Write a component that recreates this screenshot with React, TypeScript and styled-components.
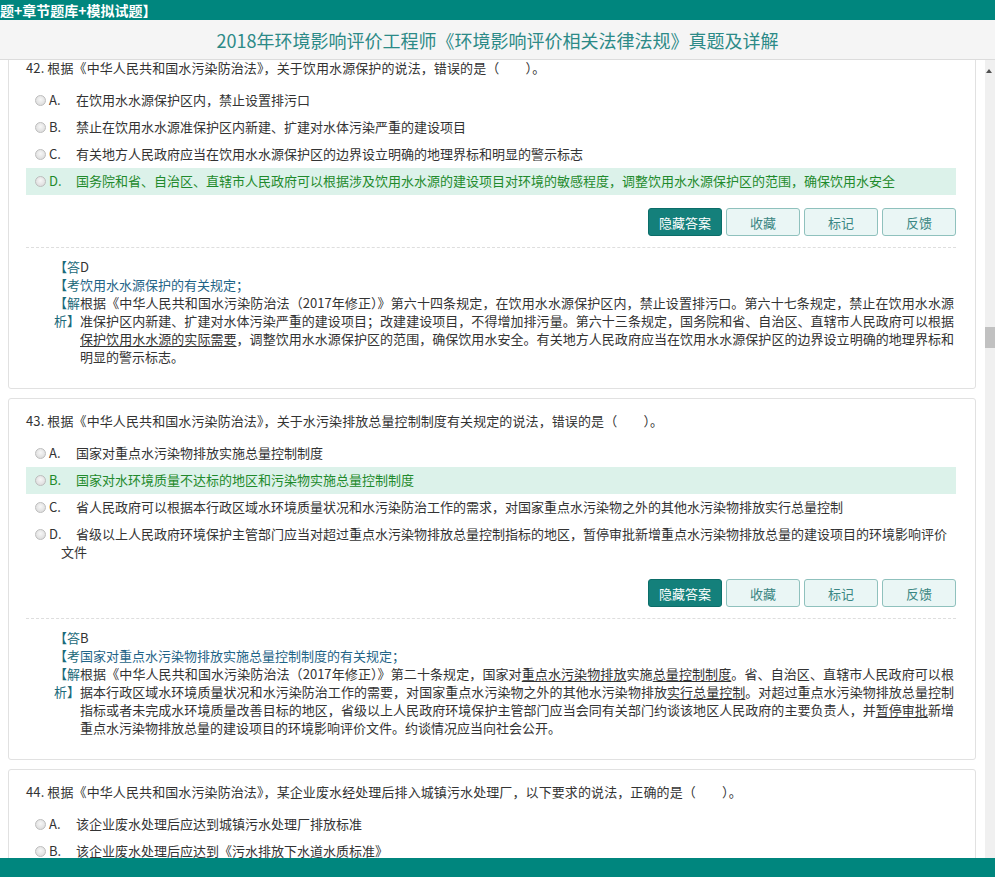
import React, { FunctionComponent, ReactNode } from 'react';
import styled, { createGlobalStyle } from 'styled-components';

const teal = '#00867e';
const fontStack =
  '"Microsoft YaHei", "Noto Sans CJK SC", "Noto Sans", sans-serif';

const GlobalStyle = createGlobalStyle`
  html, body {
    margin: 0;
    padding: 0;
    background: #fff;
  }

  body {
    font-family: ${fontStack};
    font-size: 13px;
    color: #333;
  }
`;

const Page = styled.div`
  display: flex;
  flex-direction: column;
  height: 877px;
  overflow: hidden;
`;

const TopBar = styled.div`
  flex: none;
  height: 20px;
  background: ${teal};
  color: #fff;
  font-weight: bold;
  font-size: 14px;
  line-height: 20px;
  white-space: nowrap;
  overflow: hidden;
  text-indent: -56px;
`;

const TitleBar = styled.h1`
  flex: none;
  margin: 0;
  height: 39px;
  line-height: 40px;
  background: #f5f5f5;
  border-bottom: 1px solid #dcdcdc;
  text-align: center;
  font-size: 18px;
  font-weight: normal;
  color: #2c8a87;
`;

const Main = styled.div`
  flex: 1;
  min-height: 0;
  display: flex;
`;

const Content = styled.div`
  flex: 1;
  overflow: hidden;
  padding: 0 9px 0 8px;
`;

const CardList = styled.div`
  display: flex;
  flex-direction: column;
  gap: 9px;
  margin-top: -15px;
`;

const Card = styled.section`
  background: #fff;
  border: 1px solid #e1e1e1;
  border-radius: 3px;
  padding: 13px 19px 22px 17px;
`;

const Question = styled.div`
  line-height: 18px;
  letter-spacing: 0.1px;
`;

const Options = styled.div`
  margin-top: 10px;
`;

interface OptionRowProps {
  correct: boolean;
}

const OptionRow = styled.div<OptionRowProps>`
  padding: 4px 9px 5px 35px;
  text-indent: -26px;
  line-height: 18px;
  text-align: justify;
  background: ${({ correct }) => (correct ? '#dcf2ea' : 'transparent')};
  color: ${({ correct }) => (correct ? '#1f8a2c' : '#333')};
`;

const Radio = styled.span`
  display: inline-block;
  box-sizing: border-box;
  width: 11px;
  height: 11px;
  margin-right: 3px;
  border: 1px solid #bdbdbd;
  border-radius: 50%;
  background: radial-gradient(circle at 50% 40%, #f7f7f7, #d6d6d6);
  vertical-align: -1px;
  text-indent: 0;
`;

const Letter = styled.span`
  display: inline-block;
  width: 27px;
  text-indent: 0;
`;

const ButtonBar = styled.div`
  display: flex;
  justify-content: flex-end;
  gap: 4px;
  margin-top: 13px;
`;

interface ButtonProps {
  primary?: boolean;
}

const Button = styled.button<ButtonProps>`
  width: 74px;
  height: 28px;
  padding: 0;
  border-radius: 3px;
  font-family: ${fontStack};
  font-size: 13px;
  border: 1px solid ${({ primary }) => (primary ? '#0b6d69' : '#8fc1bd')};
  background: ${({ primary }) => (primary ? '#14807b' : '#eaf6f5')};
  color: ${({ primary }) => (primary ? '#fff' : '#3a8683')};
`;

const Divider = styled.div`
  margin-top: 11px;
  border-top: 1px dashed #dedede;
`;

const Analysis = styled.div`
  margin-top: 10px;
  padding-left: 28px;
  line-height: 18px;
`;

const AnalysisRow = styled.div`
  display: flex;
`;

const Label = styled.span`
  flex: none;
  width: 26px;
  color: #1b6a7a;
`;

interface BodyProps {
  tone?: 'point';
}

const Body = styled.div<BodyProps>`
  flex: 1;
  padding-right: 2px;
  text-align: justify;
  color: ${({ tone }) => (tone === 'point' ? '#1f6487' : '#333')};
`;

const Mark = styled.u`
  text-underline-offset: 2px;
`;

const ScrollTrack = styled.div`
  flex: none;
  width: 10px;
  background: #f0f0f0;
  display: flex;
  flex-direction: column;
  align-items: center;
`;

const ScrollArrow = styled.div`
  margin-top: 9px;
  margin-left: -2px;
  width: 0;
  height: 0;
  border-left: 3px solid transparent;
  border-right: 3px solid transparent;
  border-bottom: 4px solid #505050;
`;

const ScrollThumb = styled.div`
  margin-top: 254px;
  width: 100%;
  height: 21px;
  background: #c1c1c1;
`;

const BottomBar = styled.div`
  flex: none;
  height: 19px;
  background: ${teal};
`;

interface OptionItem {
  letter: string;
  text: string;
  correct?: boolean;
}

interface QuestionCardProps {
  title: string;
  options: OptionItem[];
  answer?: string;
  point?: string;
  analysis?: ReactNode;
}

const QuestionCard: FunctionComponent<QuestionCardProps> = ({
  title,
  options,
  answer,
  point,
  analysis,
}) => (
  <Card>
    <Question>{title}</Question>
    <Options>
      {options.map(option => (
        <OptionRow key={option.letter} correct={!!option.correct}>
          <Radio />
          <Letter>{option.letter}.</Letter>
          {option.text}
        </OptionRow>
      ))}
    </Options>
    {answer && (
      <>
        <ButtonBar>
          <Button primary>隐藏答案</Button>
          <Button>收藏</Button>
          <Button>标记</Button>
          <Button>反馈</Button>
        </ButtonBar>
        <Divider />
        <Analysis>
          <AnalysisRow>
            <Label>【答</Label>
            <Body>{answer}</Body>
          </AnalysisRow>
          <AnalysisRow>
            <Label>【考</Label>
            <Body tone="point">{point}</Body>
          </AnalysisRow>
          <AnalysisRow>
            <Label>【解析】</Label>
            <Body>{analysis}</Body>
          </AnalysisRow>
        </Analysis>
      </>
    )}
  </Card>
);

const App: FunctionComponent = () => (
  <Page>
    <GlobalStyle />
    <TopBar>【历年真题+章节题库+模拟试题】</TopBar>
    <TitleBar>
      2018年环境影响评价工程师《环境影响评价相关法律法规》真题及详解
    </TitleBar>
    <Main>
      <Content>
        <CardList>
          <QuestionCard
            title="42. 根据《中华人民共和国水污染防治法》，关于饮用水源保护的说法，错误的是（　　）。"
            options={[
              { letter: 'A', text: '在饮用水水源保护区内，禁止设置排污口' },
              {
                letter: 'B',
                text: '禁止在饮用水水源准保护区内新建、扩建对水体污染严重的建设项目',
              },
              {
                letter: 'C',
                text: '有关地方人民政府应当在饮用水水源保护区的边界设立明确的地理界标和明显的警示标志',
              },
              {
                letter: 'D',
                text: '国务院和省、自治区、直辖市人民政府可以根据涉及饮用水水源的建设项目对环境的敏感程度，调整饮用水水源保护区的范围，确保饮用水安全',
                correct: true,
              },
            ]}
            answer="D"
            point="饮用水水源保护的有关规定；"
            analysis={
              <>
                根据《中华人民共和国水污染防治法（2017年修正）》第六十四条规定，在饮用水水源保护区内，禁止设置排污口。第六十七条规定，禁止在饮用水水源准保护区内新建、扩建对水体污染严重的建设项目；改建建设项目，不得增加排污量。第六十三条规定，国务院和省、自治区、直辖市人民政府可以根据
                <Mark>保护饮用水水源的实际需要</Mark>
                ，调整饮用水水源保护区的范围，确保饮用水安全。有关地方人民政府应当在饮用水水源保护区的边界设立明确的地理界标和明显的警示标志。
              </>
            }
          />
          <QuestionCard
            title="43. 根据《中华人民共和国水污染防治法》，关于水污染排放总量控制制度有关规定的说法，错误的是（　　）。"
            options={[
              { letter: 'A', text: '国家对重点水污染物排放实施总量控制制度' },
              {
                letter: 'B',
                text: '国家对水环境质量不达标的地区和污染物实施总量控制制度',
                correct: true,
              },
              {
                letter: 'C',
                text: '省人民政府可以根据本行政区域水环境质量状况和水污染防治工作的需求，对国家重点水污染物之外的其他水污染物排放实行总量控制',
              },
              {
                letter: 'D',
                text: '省级以上人民政府环境保护主管部门应当对超过重点水污染物排放总量控制指标的地区，暂停审批新增重点水污染物排放总量的建设项目的环境影响评价文件',
              },
            ]}
            answer="B"
            point="国家对重点水污染物排放实施总量控制制度的有关规定；"
            analysis={
              <>
                根据《中华人民共和国水污染防治法（2017年修正）》第二十条规定，国家对
                <Mark>重点水污染物排放</Mark>实施<Mark>总量控制制度</Mark>
                。省、自治区、直辖市人民政府可以根据本行政区域水环境质量状况和水污染防治工作的需要，对国家重点水污染物之外的其他水污染物排放
                <Mark>实行总量控制</Mark>
                。对超过重点水污染物排放总量控制指标或者未完成水环境质量改善目标的地区，省级以上人民政府环境保护主管部门应当会同有关部门约谈该地区人民政府的主要负责人，并
                <Mark>暂停审批</Mark>
                新增重点水污染物排放总量的建设项目的环境影响评价文件。约谈情况应当向社会公开。
              </>
            }
          />
          <QuestionCard
            title="44. 根据《中华人民共和国水污染防治法》，某企业废水经处理后排入城镇污水处理厂，以下要求的说法，正确的是（　　）。"
            options={[
              { letter: 'A', text: '该企业废水处理后应达到城镇污水处理厂排放标准' },
              { letter: 'B', text: '该企业废水处理后应达到《污水排放下水道水质标准》' },
              { letter: 'C', text: '该企业废水处理后应达到国家或者地方规定的水污染物排放标准' },
            ]}
          />
        </CardList>
      </Content>
      <ScrollTrack>
        <ScrollArrow />
        <ScrollThumb />
      </ScrollTrack>
    </Main>
    <BottomBar />
  </Page>
);

export default App;
